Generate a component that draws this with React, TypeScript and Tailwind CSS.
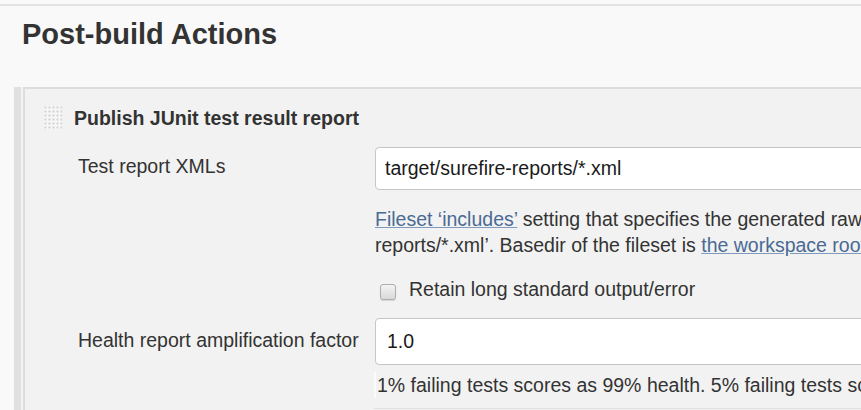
import React from "react";

function DragHandle() {
  const dots: React.ReactNode[] = [];
  for (let r = 0; r < 6; r++) {
    for (let c = 0; c < 5; c++) {
      dots.push(<rect key={`${r}-${c}`} x={c * 4} y={r * 4} width={2} height={2} fill="#d2d2d2" />);
    }
  }
  return (
    <svg width="18" height="23" viewBox="0 0 18 23" className="shrink-0 block">
      <rect x="0" y="0" width="18" height="23" fill="#f7f7f7" />
      <g transform="translate(0.5,0.5)">{dots}</g>
    </svg>
  );
}

export default function App() {
  return (
    <div className="w-[861px] h-[410px] overflow-hidden bg-[#f9f9f9] font-['Liberation_Sans',Arial,sans-serif] text-[#333]">
      <div className="pt-[4px]">
        <div className="h-[83px] border-t-2 border-[#e3e3e3] pt-[12px] pl-[22px]">
          <h1 className="text-[29px] leading-[33px] font-bold text-[#333]">Post-build Actions</h1>
        </div>
        <div className="pl-[14px]">
          <div className="border-l-[7px] border-[#e0e0e0] pl-[2px] bg-[#f4f4f4]">
            <div className="border-l-2 border-t-2 border-[#dddddd] bg-[#f2f2f2] pt-[17px] h-[340px]">
              <div className="flex items-start gap-[12px] pl-[19px]">
                <DragHandle />
                <div className="text-[19.5px] leading-[24px] font-bold whitespace-nowrap">
                  Publish JUnit test result report
                </div>
              </div>

              <div className="pl-[53px] text-[19.5px]">
                <div className="flex items-start mt-[17px]">
                  <div className="w-[297px] shrink-0 pt-[7px] leading-[24px] whitespace-nowrap">Test report XMLs</div>
                  <div className="w-[560px] shrink-0 h-[43px] border border-[#c6c6c6] rounded-[4px] bg-white pl-[9px] flex items-center text-[#1a1a1a] whitespace-nowrap">
                    target/surefire-reports/*.xml
                  </div>
                </div>

                <div className="ml-[297px] mt-[16px] leading-[26px] whitespace-nowrap">
                  <div>
                    <span className="text-[#4a6a94] underline decoration-[#7f9abb]">Fileset ‘includes’</span> setting that specifies the generated raw XML report files, such as ‘myproject/target/test-
                  </div>
                  <div>
                    reports/*.xml’. Basedir of the fileset is{" "}
                    <span className="text-[#4a6a94] underline decoration-[#7f9abb]">the workspace root</span>.
                  </div>
                </div>

                <div className="ml-[297px] mt-[19px] flex items-start">
                  <span className="ml-[5px] mt-[7px] w-[16px] h-[16px] shrink-0 rounded-[3px] border border-[#adadad] bg-gradient-to-b from-[#f3f3f3] to-[#d9d9d9] shadow-[0_1px_1px_rgba(0,0,0,0.12)]" />
                  <span className="ml-[13px] leading-[24px] whitespace-nowrap">Retain long standard output/error</span>
                </div>

                <div className="flex items-start mt-[17px]">
                  <div className="w-[297px] shrink-0 pt-[10px] leading-[24px] whitespace-nowrap">Health report amplification factor</div>
                  <div className="w-[560px] shrink-0 h-[47px] border border-[#c6c6c6] rounded-[4px] bg-white pl-[11px] flex items-center text-[#1a1a1a]">
                    1.0
                  </div>
                </div>

                <div className="ml-[296px] mt-[7px] border-b border-[#e0e0e0] pb-[10px]">
                  <div className="border-l-2 border-[#fbfbfb] pl-[1px] leading-[26px] whitespace-nowrap">
                    1% failing tests scores as 99% health. 5% failing tests scores as 95% health
                  </div>
                </div>
              </div>
            </div>
          </div>
        </div>
      </div>
    </div>
  );
}
